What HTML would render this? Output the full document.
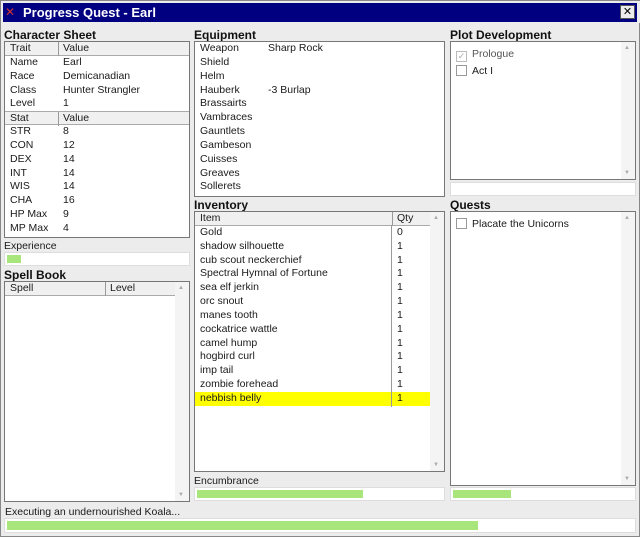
<!DOCTYPE html>
<html><head><style>
*{margin:0;padding:0;box-sizing:border-box}
body{width:640px;height:537px;background:#ececec;font-family:"Liberation Sans","DejaVu Sans",sans-serif;font-size:10.5px;color:#1a1a1a;position:relative;overflow:hidden;border:1px solid #888}
.a{position:absolute}
.title{left:0;top:0;width:640px;height:22px;background:#ececec}
.tb{left:2px;top:2px;width:634px;height:19px;background:#000080;color:#fff;font-weight:bold;font-size:13px;line-height:19px;padding-left:20px}
.lbl{font-weight:bold;font-size:12px;color:#111}
.box{background:#fff;border:1px solid #777}
.row{position:relative;height:13.85px;line-height:13.85px;white-space:nowrap}
.hdr{background:#f0f0f0;border-bottom:1px solid #aaa;border-top:1px solid #aaa}
.c2{position:absolute;top:0}
.sb{position:absolute;top:0;bottom:0;width:14px;right:0;background:#f4f4f4}
.sb:before{content:"▲";position:absolute;top:3px;left:3px;font-size:6px;color:#aaa}
.sb:after{content:"▼";position:absolute;bottom:3px;left:3px;font-size:6px;color:#aaa}
.bar{background:#fff;border:1px solid #ddd}
.fill{position:absolute;left:2px;top:2px;bottom:2px;background:#a8e57a}
.cb{display:inline-block;width:11px;height:11px;border:1px solid #999;vertical-align:-2px;margin-right:5px;background:#fff}
</style></head><body>
<div class="a title"></div>
<div class="a tb">Progress Quest - Earl</div>
<div class="a" style="left:4px;top:4px;color:#c33;font-size:12px;font-weight:bold;line-height:14px">✕</div>
<div class="a" style="left:619px;top:4px;width:15px;height:14px;background:#ececec;border:1px solid #555;color:#000;font-size:11px;line-height:12px;text-align:center;font-weight:bold">✕</div>

<div class="a lbl" style="left:3px;top:27px">Character Sheet</div>
<div class="a box" style="left:3px;top:40px;width:186px;height:197px">
 <div class="row hdr" style="border-top:0;padding-left:5px">Trait<span class="c2" style="left:53px;border-left:1px solid #999;padding-left:4px">Value</span></div>
 <div class="row" style="padding-left:5px">Name<span class="c2" style="left:58px">Earl</span></div>
 <div class="row" style="padding-left:5px">Race<span class="c2" style="left:58px">Demicanadian</span></div>
 <div class="row" style="padding-left:5px">Class<span class="c2" style="left:58px">Hunter Strangler</span></div>
 <div class="row" style="padding-left:5px">Level<span class="c2" style="left:58px">1</span></div>
 <div class="row hdr" style="padding-left:5px">Stat<span class="c2" style="left:53px;border-left:1px solid #999;padding-left:4px">Value</span></div>
 <div class="row" style="padding-left:5px">STR<span class="c2" style="left:58px">8</span></div>
 <div class="row" style="padding-left:5px">CON<span class="c2" style="left:58px">12</span></div>
 <div class="row" style="padding-left:5px">DEX<span class="c2" style="left:58px">14</span></div>
 <div class="row" style="padding-left:5px">INT<span class="c2" style="left:58px">14</span></div>
 <div class="row" style="padding-left:5px">WIS<span class="c2" style="left:58px">14</span></div>
 <div class="row" style="padding-left:5px">CHA<span class="c2" style="left:58px">16</span></div>
 <div class="row" style="padding-left:5px">HP Max<span class="c2" style="left:58px">9</span></div>
 <div class="row" style="padding-left:5px">MP Max<span class="c2" style="left:58px">4</span></div>
</div>
<div class="a" style="left:3px;top:239px">Experience</div>
<div class="a bar" style="left:3px;top:251px;width:186px;height:14px"><div class="fill" style="width:14px"></div></div>
<div class="a lbl" style="left:3px;top:267px">Spell Book</div>
<div class="a box" style="left:3px;top:280px;width:186px;height:221px">
 <div class="row hdr" style="border-top:0;padding-left:5px;width:170px">Spell<span class="c2" style="left:100px;border-left:1px solid #999;padding-left:4px">Level</span></div>
 <div class="sb"></div>
</div>

<div class="a lbl" style="left:193px;top:27px">Equipment</div>
<div class="a box" style="left:193px;top:40px;width:251px;height:156px;padding-top:0">
 <div class="row" style="padding-left:5px">Weapon<span class="c2" style="left:73px">Sharp Rock</span></div>
 <div class="row" style="padding-left:5px">Shield</div>
 <div class="row" style="padding-left:5px">Helm</div>
 <div class="row" style="padding-left:5px">Hauberk<span class="c2" style="left:73px">-3 Burlap</span></div>
 <div class="row" style="padding-left:5px">Brassairts</div>
 <div class="row" style="padding-left:5px">Vambraces</div>
 <div class="row" style="padding-left:5px">Gauntlets</div>
 <div class="row" style="padding-left:5px">Gambeson</div>
 <div class="row" style="padding-left:5px">Cuisses</div>
 <div class="row" style="padding-left:5px">Greaves</div>
 <div class="row" style="padding-left:5px">Sollerets</div>
</div>

<div class="a lbl" style="left:193px;top:197px">Inventory</div>
<div class="a box" style="left:193px;top:210px;width:251px;height:261px">
 <div class="row hdr" style="border-top:0;padding-left:5px;width:235px">Item<span class="c2" style="left:197px;border-left:1px solid #999;padding-left:4px">Qty</span></div>
 <div style="width:235px">
 <div class="row" style="padding-left:5px">Gold<span class="c2" style="left:202px">0</span></div>
 <div class="row" style="padding-left:5px">shadow silhouette<span class="c2" style="left:202px">1</span></div>
 <div class="row" style="padding-left:5px">cub scout neckerchief<span class="c2" style="left:202px">1</span></div>
 <div class="row" style="padding-left:5px">Spectral Hymnal of Fortune<span class="c2" style="left:202px">1</span></div>
 <div class="row" style="padding-left:5px">sea elf jerkin<span class="c2" style="left:202px">1</span></div>
 <div class="row" style="padding-left:5px">orc snout<span class="c2" style="left:202px">1</span></div>
 <div class="row" style="padding-left:5px">manes tooth<span class="c2" style="left:202px">1</span></div>
 <div class="row" style="padding-left:5px">cockatrice wattle<span class="c2" style="left:202px">1</span></div>
 <div class="row" style="padding-left:5px">camel hump<span class="c2" style="left:202px">1</span></div>
 <div class="row" style="padding-left:5px">hogbird curl<span class="c2" style="left:202px">1</span></div>
 <div class="row" style="padding-left:5px">imp tail<span class="c2" style="left:202px">1</span></div>
 <div class="row" style="padding-left:5px">zombie forehead<span class="c2" style="left:202px">1</span></div>
 <div class="row" style="padding-left:5px;background:#ffff00">nebbish belly<span class="c2" style="left:202px">1</span></div>
 </div>
 <div class="a" style="left:196px;top:13px;width:1px;height:182px;background:#999"></div>
 <div class="sb"></div>
</div>
<div class="a" style="left:193px;top:474px">Encumbrance</div>
<div class="a bar" style="left:193px;top:486px;width:251px;height:14px"><div class="fill" style="width:166px"></div></div>

<div class="a lbl" style="left:449px;top:27px">Plot Development</div>
<div class="a box" style="left:449px;top:40px;width:186px;height:139px;padding-top:4px">
 <div class="row" style="padding-left:5px;height:17px;line-height:17px;color:#555"><span class="cb" style="border-color:#bbb;color:#aaa;font-size:9px;line-height:9px;text-align:center">✓</span>Prologue</div>
 <div class="row" style="padding-left:5px;height:17px;line-height:17px"><span class="cb"></span>Act I</div>
 <div class="sb"></div>
</div>
<div class="a bar" style="left:449px;top:181px;width:186px;height:14px"></div>
<div class="a lbl" style="left:449px;top:197px">Quests</div>
<div class="a box" style="left:449px;top:210px;width:186px;height:275px;padding-top:4px">
 <div class="row" style="padding-left:5px;height:17px;line-height:17px"><span class="cb"></span>Placate the Unicorns</div>
 <div class="sb"></div>
</div>
<div class="a bar" style="left:449px;top:486px;width:186px;height:14px"><div class="fill" style="width:58px"></div></div>

<div class="a" style="left:4px;top:505px">Executing an undernourished Koala...</div>
<div class="a bar" style="left:3px;top:517px;width:632px;height:15px"><div class="fill" style="width:471px"></div></div>
</body></html>
